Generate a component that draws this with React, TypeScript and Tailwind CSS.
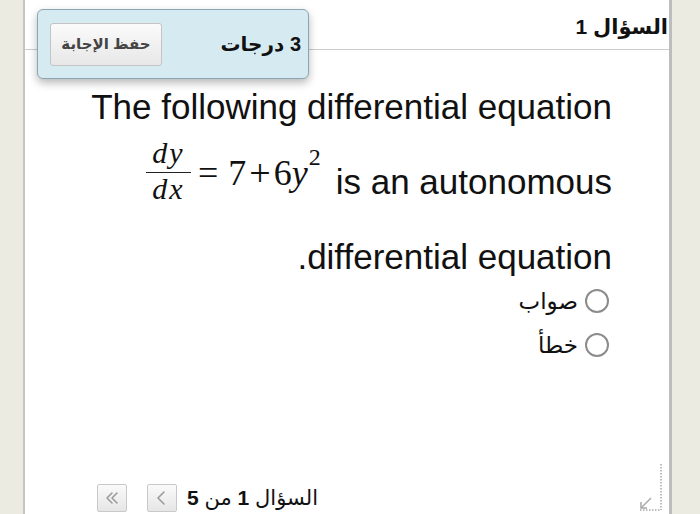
import React from 'react'

const sans = { fontFamily: '"Liberation Sans", "DejaVu Sans", Arial, sans-serif' }
const serif = { fontFamily: '"Liberation Serif", "Times New Roman", serif' }

function Radio({ label }: { label: string }) {
  return (
    <div className="flex items-center justify-end gap-[7px] h-[44px]">
      <span className="text-[23px] leading-none text-[#111]">{label}</span>
      <span className="w-[24px] h-[24px] rounded-full border-2 border-[#8c8c8c] bg-white" />
    </div>
  )
}

function NavButton({ double }: { double?: boolean }) {
  return (
    <button className="w-[30px] h-[28px] flex items-center justify-center border border-[#c9c9c9] rounded-[2px] bg-gradient-to-b from-[#fafafa] to-[#e6e6e6]">
      <svg width="16" height="16" viewBox="0 0 16 16" fill="none" stroke="#9c9c9c" strokeWidth="1.6" strokeLinecap="round" strokeLinejoin="round">
        {double ? (
          <>
            <polyline points="8,3 3,8 8,13" />
            <polyline points="13,3 8,8 13,13" />
          </>
        ) : (
          <polyline points="10,2 4,8 10,14" />
        )}
      </svg>
    </button>
  )
}

export default function App() {
  return (
    <div className="w-[700px] h-[514px] flex overflow-hidden" style={sans}>
      <div className="w-[25px] bg-[#ecebe2] border-r-2 border-[#c4c4c0]" />

      <div className="relative flex-1 bg-white flex flex-col">
        {/* header */}
        <div className="h-[50px] border-b border-[#cdcdcd] flex justify-end items-start pt-[13px] pr-[1px]">
          <span dir="rtl" className="text-[21px] font-bold text-[#111] leading-[28px]">السؤال 1</span>
        </div>

        {/* floating points box */}
        <div className="absolute left-[12px] top-[9px] w-[272px] h-[70px] rounded-[6px] border border-[#8aa6ae] bg-[#d6ebf1] shadow-[0_4px_8px_rgba(0,0,0,0.28)] flex items-center justify-between pl-[12px] pr-[7px]">
          <button className="w-[112px] h-[43px] rounded-[3px] border border-[#c4c4c4] bg-gradient-to-b from-[#fbfbfb] to-[#e7e7e7] text-[15px] font-bold text-[#444]">
            حفظ الإجابة
          </button>
          <span dir="rtl" className="text-[20px] font-bold text-[#111]">3 درجات</span>
        </div>

        {/* question */}
        <div className="mt-[19px] pr-[57px] flex flex-col items-end text-[35px] text-[#111]">
          <div className="h-[75px] leading-[75px]">The following differential equation</div>
          <div className="h-[75px] flex items-start">
            <div className="flex items-start" style={serif}>
              <div className="flex flex-col items-center w-[45px] mt-[-6px] italic">
                <span className="text-[30px] leading-[30px] tracking-[2px]">dy</span>
                <span className="mt-[4px] w-full h-px bg-[#222]" />
                <span className="mt-[1px] text-[30px] leading-[30px] tracking-[2px]">dx</span>
              </div>
              <span className="ml-[7px] mt-[11px] text-[36px] leading-[36px]">=</span>
              <span className="ml-[10px] mt-[11px] text-[36px] leading-[36px]">7</span>
              <span className="ml-[3px] mt-[11px] text-[38px] leading-[36px]">+</span>
              <span className="ml-[3px] mt-[11px] text-[36px] leading-[36px]">6</span>
              <span className="mt-[11px] text-[36px] leading-[36px] italic">y</span>
              <span className="ml-[1px] mt-[1px] text-[24px] leading-[24px]">2</span>
            </div>
            <span className="leading-[75px] ml-[15px]">is an autonomous</span>
          </div>
          <div className="h-[75px] leading-[75px]" dir="rtl">differential equation.</div>
        </div>

        {/* answers */}
        <div className="pr-[60px] mt-[-15px] flex flex-col">
          <Radio label="صواب" />
          <Radio label="خطأ" />
        </div>

        {/* footer nav */}
        <div className="mt-auto mb-[1px] pl-[72px] flex items-center h-[30px]">
          <NavButton double />
          <span className="ml-[20px]"><NavButton /></span>
          <span dir="rtl" className="ml-[10px] text-[21px] text-[#111]">
            السؤال <span className="font-bold">1</span> من <span className="font-bold">5</span>
          </span>
        </div>

        {/* resize grip */}
        <svg className="absolute right-[4px] bottom-[2px]" width="28" height="50" viewBox="0 0 28 50">
          <line x1="24" y1="2" x2="24" y2="48" stroke="#a8a8a8" strokeWidth="1.5" strokeDasharray="1.5 1.5" />
          <line x1="3" y1="48" x2="24" y2="48" stroke="#a8a8a8" strokeWidth="1.5" strokeDasharray="1.5 1.5" />
          <line x1="4" y1="46" x2="14" y2="36" stroke="#a8a8a8" strokeWidth="1.5" />
          <polyline points="4,40 4,46 10,46" fill="none" stroke="#a8a8a8" strokeWidth="1.5" />
        </svg>
      </div>

      <div className="w-[31px] bg-[#ecebe2] border-l-[3px] border-[#bdbdbd]" />
    </div>
  )
}
